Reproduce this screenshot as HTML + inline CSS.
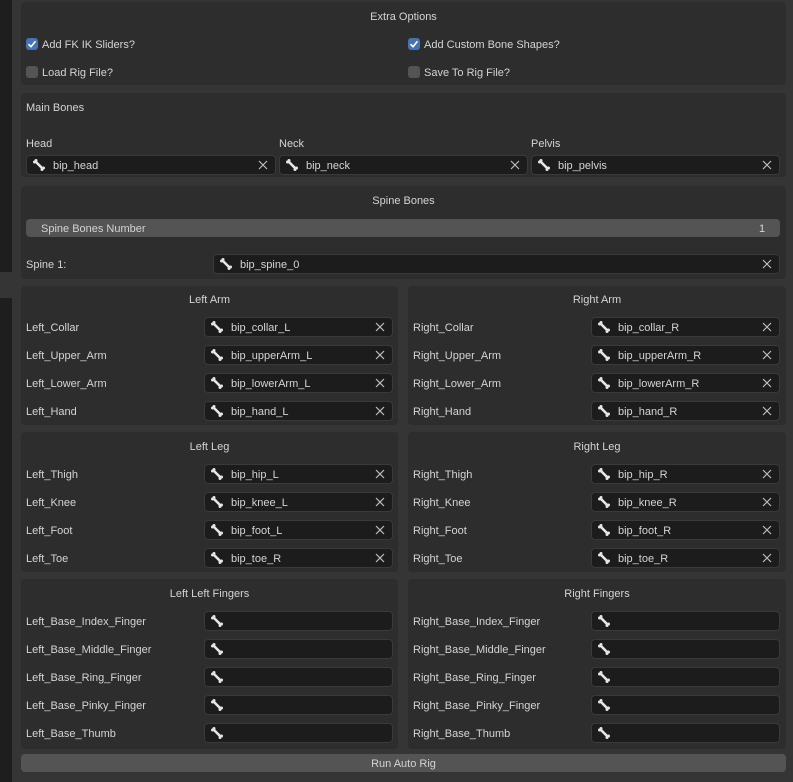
<!DOCTYPE html>
<html><head><meta charset="utf-8"><style>
*{margin:0;padding:0;box-sizing:border-box}
body{width:793px;height:782px;background:#353535;position:relative;overflow:hidden;font-family:"Liberation Sans","DejaVu Sans",sans-serif;font-size:11px;color:#d4d4d4}
.strip{position:absolute;left:0;width:12px;background:#1e1e1e}
.p{position:absolute;background:#2d2d2d;border-radius:4px}
.t{position:absolute;white-space:nowrap;line-height:14px;margin-top:1px}
.c{text-align:center}
.f{position:absolute;height:20px;background:#1c1c1c;border:1px solid #3a3a3a;border-radius:4px}
.f svg.b{position:absolute;left:5px;top:2px}
.f span{position:absolute;left:26px;top:3px;line-height:14px}
.f svg.x{position:absolute;right:7px;top:4px}
.cb{position:absolute;width:12px;height:12px;border-radius:3px;background:#545454}
.cb.on{background:#4772b3}
.sl{position:absolute;background:#545454;border-radius:4px;height:18px}
</style></head><body>
<div class="strip" style="top:0;height:272px"></div>
<div class="strip" style="top:298px;height:484px"></div>
<svg width="0" height="0" style="position:absolute"><defs>
<symbol id="bone" viewBox="0 0 14 14"><g stroke="#e6e6e6" stroke-linecap="round"><path d="M3.5 3.5L10.5 10.5" stroke-width="2.6"/><circle cx="2.5" cy="4" r="1.5" fill="#e6e6e6" stroke="none"/><circle cx="4" cy="2.5" r="1.5" fill="#e6e6e6" stroke="none"/><circle cx="10" cy="11.5" r="1.5" fill="#e6e6e6" stroke="none"/><circle cx="11.5" cy="10" r="1.5" fill="#e6e6e6" stroke="none"/></g></symbol>
<symbol id="xx" viewBox="0 0 10 10"><path d="M1 1L9 9M9 1L1 9" stroke="#bdbdbd" stroke-width="1.2"/></symbol>
</defs></svg>

<div class="p" style="left:21px;top:2px;width:765px;height:83px"></div>
<div class="t c" style="left:21px;width:765px;top:9px">Extra Options</div>
<div class="cb on" style="left:26px;top:38px"><svg width="12" height="12"><path d="M2.5 6.2l2.5 2.5 4.5-5.5" stroke="#fff" stroke-width="1.6" fill="none"/></svg></div>
<div class="t" style="left:42px;top:37px">Add FK IK Sliders?</div>
<div class="cb" style="left:26px;top:66px"></div>
<div class="t" style="left:42px;top:65px">Load Rig File?</div>
<div class="cb on" style="left:408px;top:38px"><svg width="12" height="12"><path d="M2.5 6.2l2.5 2.5 4.5-5.5" stroke="#fff" stroke-width="1.6" fill="none"/></svg></div>
<div class="t" style="left:424px;top:37px">Add Custom Bone Shapes?</div>
<div class="cb" style="left:408px;top:66px"></div>
<div class="t" style="left:424px;top:65px">Save To Rig File?</div>

<div class="p" style="left:21px;top:93px;width:765px;height:84px"></div>
<div class="t" style="left:26px;top:100px">Main Bones</div>
<div class="t" style="left:26px;top:136px">Head</div>
<div class="t" style="left:279px;top:136px">Neck</div>
<div class="t" style="left:531px;top:136px">Pelvis</div>
<div class="f" style="left:26px;top:155px;width:250px"><svg class="b" width="14" height="14"><use href="#bone"/></svg><span>bip_head</span><svg class="x" width="10" height="10"><use href="#xx"/></svg></div>
<div class="f" style="left:279px;top:155px;width:249px"><svg class="b" width="14" height="14"><use href="#bone"/></svg><span>bip_neck</span><svg class="x" width="10" height="10"><use href="#xx"/></svg></div>
<div class="f" style="left:531px;top:155px;width:249px"><svg class="b" width="14" height="14"><use href="#bone"/></svg><span>bip_pelvis</span><svg class="x" width="10" height="10"><use href="#xx"/></svg></div>

<div class="p" style="left:21px;top:186px;width:765px;height:93px"></div>
<div class="t c" style="left:21px;width:765px;top:193px">Spine Bones</div>
<div class="sl" style="left:26px;top:219px;width:754px"></div>
<div class="t" style="left:41px;top:221px">Spine Bones Number</div>
<div class="t" style="left:759px;top:221px">1</div>
<div class="t" style="left:26px;top:257px">Spine 1:</div>
<div class="f" style="left:213px;top:254px;width:567px"><svg class="b" width="14" height="14"><use href="#bone"/></svg><span>bip_spine_0</span><svg class="x" width="10" height="10"><use href="#xx"/></svg></div>

<div class="p" style="left:21px;top:286px;width:377px;height:139px"></div>
<div class="p" style="left:408px;top:286px;width:378px;height:139px"></div>
<div class="p" style="left:21px;top:432px;width:377px;height:140px"></div>
<div class="p" style="left:408px;top:432px;width:378px;height:140px"></div>
<div class="p" style="left:21px;top:579px;width:377px;height:170px"></div>
<div class="p" style="left:408px;top:579px;width:378px;height:170px"></div>
<div class="t c" style="left:21px;width:377px;top:292px">Left Arm</div>
<div class="t c" style="left:408px;width:378px;top:292px">Right Arm</div>
<div class="t c" style="left:21px;width:377px;top:439px">Left Leg</div>
<div class="t c" style="left:408px;width:378px;top:439px">Right Leg</div>
<div class="t c" style="left:21px;width:377px;top:586px">Left Left Fingers</div>
<div class="t c" style="left:408px;width:378px;top:586px">Right Fingers</div>

<div class="t" style="left:26px;top:320px">Left_Collar</div>
<div class="f" style="left:204px;top:317px;width:189px"><svg class="b" width="14" height="14"><use href="#bone"/></svg><span>bip_collar_L</span><svg class="x" width="10" height="10"><use href="#xx"/></svg></div>
<div class="t" style="left:26px;top:348px">Left_Upper_Arm</div>
<div class="f" style="left:204px;top:345px;width:189px"><svg class="b" width="14" height="14"><use href="#bone"/></svg><span>bip_upperArm_L</span><svg class="x" width="10" height="10"><use href="#xx"/></svg></div>
<div class="t" style="left:26px;top:376px">Left_Lower_Arm</div>
<div class="f" style="left:204px;top:373px;width:189px"><svg class="b" width="14" height="14"><use href="#bone"/></svg><span>bip_lowerArm_L</span><svg class="x" width="10" height="10"><use href="#xx"/></svg></div>
<div class="t" style="left:26px;top:404px">Left_Hand</div>
<div class="f" style="left:204px;top:401px;width:189px"><svg class="b" width="14" height="14"><use href="#bone"/></svg><span>bip_hand_L</span><svg class="x" width="10" height="10"><use href="#xx"/></svg></div>

<div class="t" style="left:413px;top:320px">Right_Collar</div>
<div class="f" style="left:591px;top:317px;width:189px"><svg class="b" width="14" height="14"><use href="#bone"/></svg><span>bip_collar_R</span><svg class="x" width="10" height="10"><use href="#xx"/></svg></div>
<div class="t" style="left:413px;top:348px">Right_Upper_Arm</div>
<div class="f" style="left:591px;top:345px;width:189px"><svg class="b" width="14" height="14"><use href="#bone"/></svg><span>bip_upperArm_R</span><svg class="x" width="10" height="10"><use href="#xx"/></svg></div>
<div class="t" style="left:413px;top:376px">Right_Lower_Arm</div>
<div class="f" style="left:591px;top:373px;width:189px"><svg class="b" width="14" height="14"><use href="#bone"/></svg><span>bip_lowerArm_R</span><svg class="x" width="10" height="10"><use href="#xx"/></svg></div>
<div class="t" style="left:413px;top:404px">Right_Hand</div>
<div class="f" style="left:591px;top:401px;width:189px"><svg class="b" width="14" height="14"><use href="#bone"/></svg><span>bip_hand_R</span><svg class="x" width="10" height="10"><use href="#xx"/></svg></div>

<div class="t" style="left:26px;top:467px">Left_Thigh</div>
<div class="f" style="left:204px;top:464px;width:189px"><svg class="b" width="14" height="14"><use href="#bone"/></svg><span>bip_hip_L</span><svg class="x" width="10" height="10"><use href="#xx"/></svg></div>
<div class="t" style="left:26px;top:495px">Left_Knee</div>
<div class="f" style="left:204px;top:492px;width:189px"><svg class="b" width="14" height="14"><use href="#bone"/></svg><span>bip_knee_L</span><svg class="x" width="10" height="10"><use href="#xx"/></svg></div>
<div class="t" style="left:26px;top:523px">Left_Foot</div>
<div class="f" style="left:204px;top:520px;width:189px"><svg class="b" width="14" height="14"><use href="#bone"/></svg><span>bip_foot_L</span><svg class="x" width="10" height="10"><use href="#xx"/></svg></div>
<div class="t" style="left:26px;top:551px">Left_Toe</div>
<div class="f" style="left:204px;top:548px;width:189px"><svg class="b" width="14" height="14"><use href="#bone"/></svg><span>bip_toe_R</span><svg class="x" width="10" height="10"><use href="#xx"/></svg></div>

<div class="t" style="left:413px;top:467px">Right_Thigh</div>
<div class="f" style="left:591px;top:464px;width:189px"><svg class="b" width="14" height="14"><use href="#bone"/></svg><span>bip_hip_R</span><svg class="x" width="10" height="10"><use href="#xx"/></svg></div>
<div class="t" style="left:413px;top:495px">Right_Knee</div>
<div class="f" style="left:591px;top:492px;width:189px"><svg class="b" width="14" height="14"><use href="#bone"/></svg><span>bip_knee_R</span><svg class="x" width="10" height="10"><use href="#xx"/></svg></div>
<div class="t" style="left:413px;top:523px">Right_Foot</div>
<div class="f" style="left:591px;top:520px;width:189px"><svg class="b" width="14" height="14"><use href="#bone"/></svg><span>bip_foot_R</span><svg class="x" width="10" height="10"><use href="#xx"/></svg></div>
<div class="t" style="left:413px;top:551px">Right_Toe</div>
<div class="f" style="left:591px;top:548px;width:189px"><svg class="b" width="14" height="14"><use href="#bone"/></svg><span>bip_toe_R</span><svg class="x" width="10" height="10"><use href="#xx"/></svg></div>

<div class="t" style="left:26px;top:614px">Left_Base_Index_Finger</div>
<div class="f" style="left:204px;top:611px;width:189px"><svg class="b" width="14" height="14"><use href="#bone"/></svg></div>
<div class="t" style="left:26px;top:642px">Left_Base_Middle_Finger</div>
<div class="f" style="left:204px;top:639px;width:189px"><svg class="b" width="14" height="14"><use href="#bone"/></svg></div>
<div class="t" style="left:26px;top:670px">Left_Base_Ring_Finger</div>
<div class="f" style="left:204px;top:667px;width:189px"><svg class="b" width="14" height="14"><use href="#bone"/></svg></div>
<div class="t" style="left:26px;top:698px">Left_Base_Pinky_Finger</div>
<div class="f" style="left:204px;top:695px;width:189px"><svg class="b" width="14" height="14"><use href="#bone"/></svg></div>
<div class="t" style="left:26px;top:726px">Left_Base_Thumb</div>
<div class="f" style="left:204px;top:723px;width:189px"><svg class="b" width="14" height="14"><use href="#bone"/></svg></div>

<div class="t" style="left:413px;top:614px">Right_Base_Index_Finger</div>
<div class="f" style="left:591px;top:611px;width:189px"><svg class="b" width="14" height="14"><use href="#bone"/></svg></div>
<div class="t" style="left:413px;top:642px">Right_Base_Middle_Finger</div>
<div class="f" style="left:591px;top:639px;width:189px"><svg class="b" width="14" height="14"><use href="#bone"/></svg></div>
<div class="t" style="left:413px;top:670px">Right_Base_Ring_Finger</div>
<div class="f" style="left:591px;top:667px;width:189px"><svg class="b" width="14" height="14"><use href="#bone"/></svg></div>
<div class="t" style="left:413px;top:698px">Right_Base_Pinky_Finger</div>
<div class="f" style="left:591px;top:695px;width:189px"><svg class="b" width="14" height="14"><use href="#bone"/></svg></div>
<div class="t" style="left:413px;top:726px">Right_Base_Thumb</div>
<div class="f" style="left:591px;top:723px;width:189px"><svg class="b" width="14" height="14"><use href="#bone"/></svg></div>

<div class="sl" style="left:21px;top:754px;width:765px;height:18px"></div>
<div class="t c" style="left:21px;width:765px;top:756px">Run Auto Rig</div>
</body></html>
